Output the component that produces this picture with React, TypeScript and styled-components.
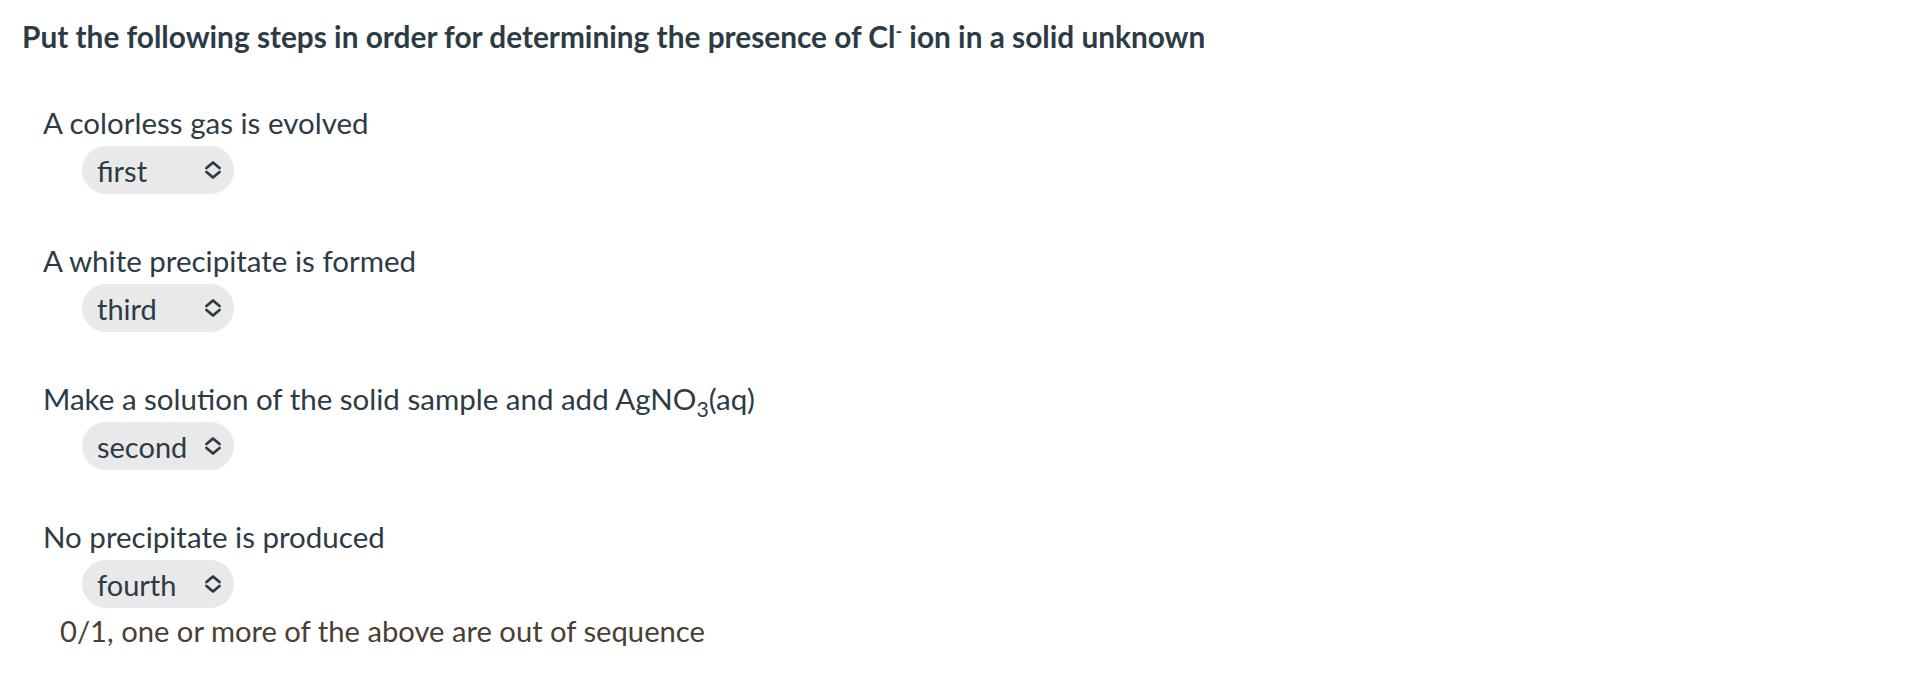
import styled, { createGlobalStyle } from "styled-components";

const Global = createGlobalStyle`
  html, body {
    margin: 0;
    padding: 0;
    background: #fff;
  }
  body {
    font-family: Lato, "Noto Sans", sans-serif;
    color: #2d3b45;
  }
`;

const Page = styled.div`
  padding: 19px 22px 0 22px;
`;

const Question = styled.h2`
  margin: 0 0 48px 0;
  font-size: 29.8px;
  font-weight: 700;
  line-height: 36px;
  color: #2d3b45;
  sup {
    font-size: 0.6em;
    line-height: 0;
  }
`;

const Items = styled.div`
  display: flex;
  flex-direction: column;
  gap: 47px;
  padding-left: 21px;
`;

const Item = styled.div`
  display: flex;
  flex-direction: column;
  align-items: flex-start;
  gap: 3px;
`;

const Label = styled.div`
  font-size: 29.5px;
  line-height: 40px;
  sub {
    font-size: 0.72em;
    line-height: 0;
  }
`;

const Select = styled.div`
  margin-left: 39px;
  width: 152px;
  height: 48px;
  box-sizing: border-box;
  border-radius: 24px;
  background: #e9e9ea;
  display: flex;
  align-items: center;
  justify-content: space-between;
  padding: 0 11px 0 15px;
  font-size: 29px;
  color: #2d3b45;
`;

const Chevron = () => (
  <svg width="20" height="20" viewBox="0 0 20 20" fill="none">
    <path
      d="M3.5 8 L10 2.5 L16.5 8 M3.5 12 L10 17.5 L16.5 12"
      stroke="#2d3b45"
      strokeWidth="2.8"
      strokeLinecap="round"
      strokeLinejoin="round"
    />
  </svg>
);

const Feedback = styled.div`
  margin-top: 8px;
  margin-left: 38px;
  font-size: 29.2px;
  line-height: 30px;
  color: #4b3f33;
`;

const steps = [
  { label: <>A colorless gas is evolved</>, value: "first" },
  { label: <>A white precipitate is formed</>, value: "third" },
  {
    label: (
      <>
        Make a solution of the solid sample and add AgNO<sub>3</sub>(aq)
      </>
    ),
    value: "second",
  },
  { label: <>No precipitate is produced</>, value: "fourth" },
];

export default function App() {
  return (
    <Page>
      <Global />
      <Question>
        Put the following steps in order for determining the presence of Cl
        <sup>-</sup> ion in a solid unknown
      </Question>
      <Items>
        {steps.map((s, i) => (
          <Item key={i}>
            <Label>{s.label}</Label>
            <Select>
              <span>{s.value}</span>
              <Chevron />
            </Select>
          </Item>
        ))}
      </Items>
      <Feedback>0/1, one or more of the above are out of sequence</Feedback>
    </Page>
  );
}
